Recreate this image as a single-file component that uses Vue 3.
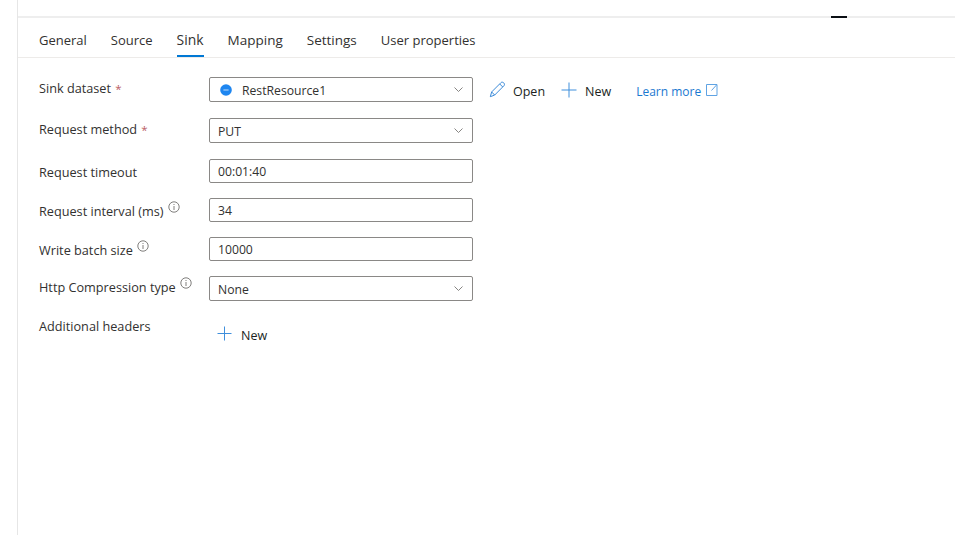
<script setup>
const tabs = ['General', 'Source', 'Sink', 'Mapping', 'Settings', 'User properties']
const activeTab = 'Sink'

const rows = [
  { label: 'Request method', required: true, value: 'PUT', select: true, cls: 'row-method' },
  { label: 'Request timeout', value: '00:01:40', cls: 'row-timeout' },
  { label: 'Request interval (ms)', info: true, value: '34', cls: 'row-interval' },
  { label: 'Write batch size', info: true, value: '10000', cls: 'row-batch' },
  { label: 'Http Compression type', info: true, value: 'None', select: true, cls: 'row-compression' }
]
</script>

<template>
  <div class="page">
    <div class="pane">
      <div class="top-bar">
        <span class="top-mark"></span>
      </div>

      <nav class="tabs">
        <span
          v-for="tab in tabs"
          :key="tab"
          class="tab"
          :class="{ active: tab === activeTab }"
        >{{ tab }}</span>
      </nav>

      <div class="form">
        <div class="row row-dataset">
          <label class="label">Sink dataset <span class="req">*</span></label>
          <div class="field select">
            <svg class="dataset-icon" width="12" height="12" viewBox="0 0 12 12">
              <circle cx="6" cy="6" r="5.8" fill="#1e86f0" />
              <rect x="3.4" y="5.4" width="5.2" height="1.2" fill="#a9d0f8" />
            </svg>
            <span class="value">RestResource1</span>
            <svg class="chevron" width="9" height="5" viewBox="0 0 9 5">
              <path d="M0.5 0.5 L4.5 4.5 L8.5 0.5" fill="none" stroke="#797775" stroke-width="0.9" />
            </svg>
          </div>
          <div class="actions">
            <button class="action open-btn">
              <svg width="17" height="17" viewBox="0 0 18 18">
                <path d="M1.4 16.6 L2.8 11.6 L12.6 1.8 C13.4 1 14.6 1 15.6 2 C16.6 3 16.6 4.2 15.8 5 L6 14.9 Z M11.4 3.2 L14.5 6.3 M2.8 11.6 L6 14.9" fill="none" stroke="#2f83d6" stroke-width="1" />
              </svg>
              <span class="action-text">Open</span>
            </button>
            <button class="action new-btn">
              <svg width="16" height="16" viewBox="0 0 16 16">
                <path d="M8 0.5 V15.5 M0.5 8 H15.5" fill="none" stroke="#3f8fdc" stroke-width="1" />
              </svg>
              <span class="action-text">New</span>
            </button>
            <a class="learn-more">
              <span>Learn more</span>
              <svg width="12" height="12" viewBox="0 0 12 12">
                <path d="M0.5 0.5 H11 V11.5 H0.5 Z M5.5 6.5 L10.5 1" fill="none" stroke="#5fa3e3" stroke-width="1" />
              </svg>
            </a>
          </div>
        </div>

        <div v-for="row in rows" :key="row.label" class="row" :class="row.cls">
          <label class="label">
            {{ row.label }}
            <span v-if="row.required" class="req">*</span>
            <svg v-if="row.info" class="info" width="12" height="12" viewBox="0 0 12 12">
              <circle cx="6" cy="6" r="5.2" fill="none" stroke="#605e5c" stroke-width="0.8" />
              <path d="M6 5 V9 M6 3 V4" fill="none" stroke="#605e5c" stroke-width="0.8" />
            </svg>
          </label>
          <div class="field" :class="{ select: row.select }">
            <span class="value">{{ row.value }}</span>
            <svg v-if="row.select" class="chevron" width="9" height="5" viewBox="0 0 9 5">
              <path d="M0.5 0.5 L4.5 4.5 L8.5 0.5" fill="none" stroke="#797775" stroke-width="0.9" />
            </svg>
          </div>
        </div>

        <div class="row row-headers">
          <label class="label">Additional headers</label>
          <button class="action headers-new">
            <svg width="15" height="15" viewBox="0 0 15 15">
              <path d="M7.5 0.5 V14.5 M0.5 7.5 H14.5" fill="none" stroke="#3f8fdc" stroke-width="1" />
            </svg>
            <span class="action-text">New</span>
          </button>
        </div>
      </div>
    </div>
  </div>
</template>

<style scoped>
.page {
  width: 955px;
  height: 535px;
  overflow: hidden;
  background: #fff;
  padding-left: 17px;
  box-sizing: border-box;
  font-family: "Open Sans", "Noto Sans", sans-serif;
  font-size: 12.7px;
  color: #323130;
}

.pane {
  height: 100%;
  border-left: 1px solid #e6e6e6;
}

.top-bar {
  position: relative;
  height: 16px;
  border-bottom: 2px solid #eeeeee;
}

.top-mark {
  position: absolute;
  left: 813px;
  top: 16px;
  width: 16px;
  height: 2px;
  background: #0b0f14;
}

.tabs {
  display: flex;
  gap: 24px;
  height: 39px;
  padding-left: 21px;
  border-bottom: 1px solid #edebe9;
}

.tab {
  height: 39px;
  line-height: 44px;
  box-sizing: border-box;
  font-size: 13px;
}

.tab:nth-child(4),
.tab:nth-child(5) {
  font-size: 13.5px;
}

.tab.active {
  font-size: 13.9px;
  font-weight: 500;
  border-bottom: 2px solid #0078d4;
}

.form {
  padding: 19px 0 0 21px;
}

.row {
  display: flex;
}

.label {
  width: 170px;
  flex: none;
  color: #323130;
  line-height: 20px;
  white-space: nowrap;
}

.req {
  color: #a4262c;
  opacity: 0.75;
  font-size: 11.5px;
  margin-left: 1px;
}

.info {
  margin-left: 1px;
  vertical-align: 3px;
}

.field {
  width: 264px;
  height: 24px;
  box-sizing: border-box;
  display: flex;
  align-items: center;
  padding: 0 9px 0 8px;
  border: 1px solid #8a8886;
  border-radius: 2px;
  font-size: 12.2px;
  color: #323130;
}

.value {
  flex: 1;
}

.field.select .value {
  padding-top: 2px;
}

.dataset-icon {
  margin: 0 10px 0 2px;
}

.actions {
  display: flex;
  align-items: center;
  margin-left: 16px;
}

.action {
  display: flex;
  align-items: center;
  gap: 7px;
  padding: 0;
  border: none;
  background: none;
  font: inherit;
  color: #201f1e;
}

.action-text {
  position: relative;
  top: 2px;
  font-size: 12.5px;
}

.new-btn {
  margin-left: 16px;
  gap: 8px;
}

.learn-more {
  display: flex;
  align-items: center;
  gap: 5px;
  margin-left: 25px;
  color: #1b78d0;
  font-size: 12px;
}

.learn-more span {
  position: relative;
  top: 2px;
}

.row-dataset .field,
.row-method .field,
.row-compression .field {
  height: 25px;
}

.row-dataset .label,
.row-method .label,
.row-compression .label {
  padding-top: 1px;
}

.row-method {
  margin-top: 16px;
}

.row-timeout {
  margin-top: 16px;
}

.row-timeout .label,
.row-interval .label,
.row-batch .label {
  padding-top: 3px;
}

.row-interval,
.row-batch,
.row-compression,
.row-headers {
  margin-top: 15px;
}

.headers-new {
  align-self: flex-start;
  gap: 9px;
  margin: 9px 0 0 8px;
}
</style>

<style>
html,
body {
  margin: 0;
  background: #fff;
}
</style>
